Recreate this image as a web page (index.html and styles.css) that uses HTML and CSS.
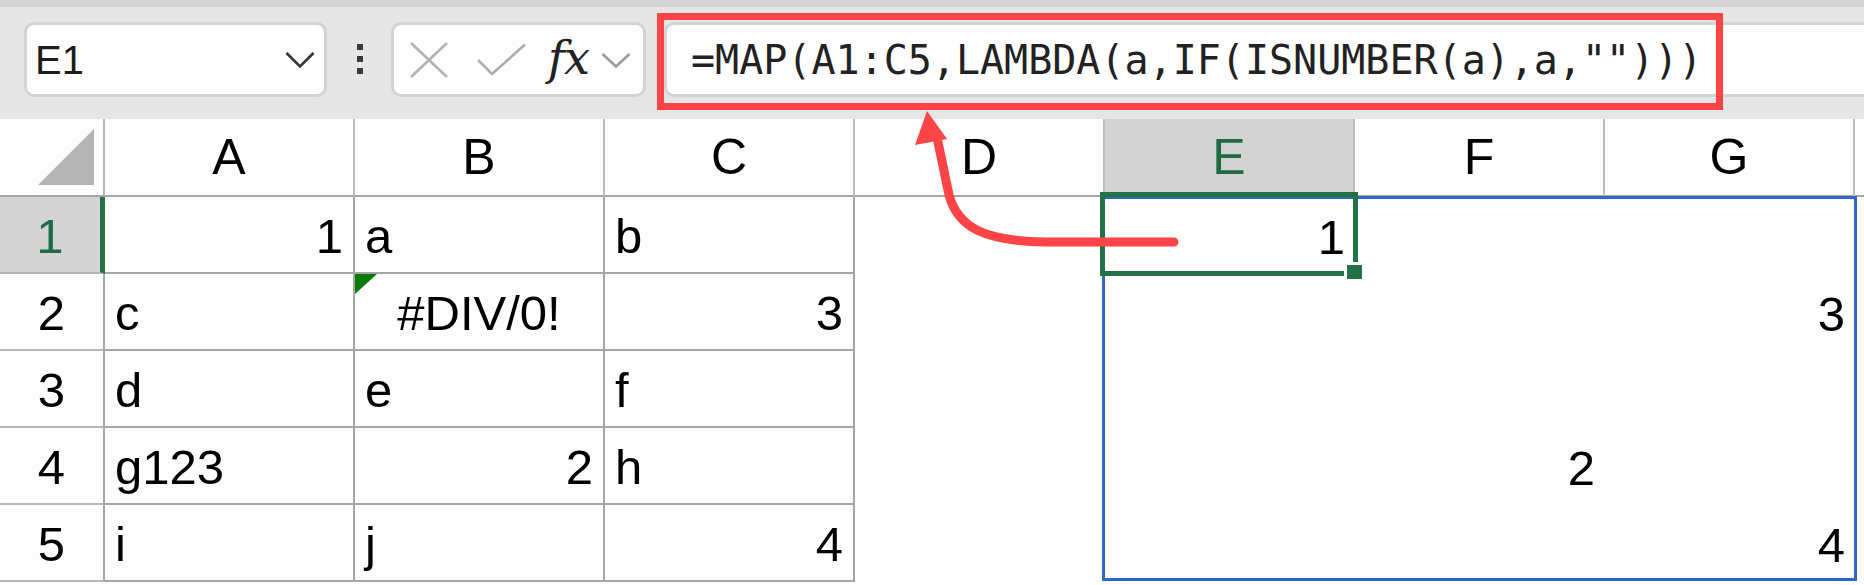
FILE: index.html
```html
<!DOCTYPE html>
<html lang="en">
<head>
<meta charset="utf-8">
<title>MAP LAMBDA</title>
<link rel="stylesheet" href="styles.css">
</head>
<body>
<div class="app">
  <div class="topstrip"></div>
  <div class="toolbar">
    <div class="namebox">
      <span class="ref">E1</span>
      <svg class="nb-chev" width="30" height="18" viewBox="0 0 30 18"><polyline points="1.5,2 15,15.5 28.5,2" fill="none" stroke="#333" stroke-width="2.6"/></svg>
    </div>
    <div class="grip"><i></i><i></i><i></i></div>
    <div class="fxbox">
      <svg class="ic-x" width="38" height="36" viewBox="0 0 38 36"><path d="M1 1 L37 35 M37 1 L1 35" fill="none" stroke="#b3b3b3" stroke-width="2.6"/></svg>
      <svg class="ic-check" width="49" height="33" viewBox="0 0 49 33"><polyline points="1,17 15,31 48,1.5" fill="none" stroke="#adadad" stroke-width="2.6"/></svg>
      <span class="fx">fx</span>
      <svg class="ic-chev" width="30" height="16" viewBox="0 0 30 16"><polyline points="1.5,2 15,14.5 28.5,2" fill="none" stroke="#9c9c9c" stroke-width="2.6"/></svg>
    </div>
    <div class="formula">=MAP(A1:C5,LAMBDA(a,IF(ISNUMBER(a),a,"")))</div>
    <div class="highlight"></div>
  </div>

  <div class="sheet">
    <div class="c corner"><svg width="56" height="56" viewBox="0 0 56 56"><polygon points="56,0 56,56 0,56" fill="#b4b4b4"/></svg></div>
    <div class="c hd">A</div>
    <div class="c hd">B</div>
    <div class="c hd">C</div>
    <div class="c hd">D</div>
    <div class="c hd sel">E</div>
    <div class="c hd">F</div>
    <div class="c hd">G</div>
    <div class="c hd last"></div>

    <div class="c rh sel">1</div>
    <div class="c bd num">1</div>
    <div class="c bd">a</div>
    <div class="c bd">b</div>
    <div class="c"></div>
    <div class="c num">1</div>
    <div class="c"></div>
    <div class="c"></div>
    <div class="c last"></div>

    <div class="c rh">2</div>
    <div class="c bd">c</div>
    <div class="c bd err"><span class="flag"></span>#DIV/0!</div>
    <div class="c bd num">3</div>
    <div class="c"></div>
    <div class="c"></div>
    <div class="c"></div>
    <div class="c num">3</div>
    <div class="c last"></div>

    <div class="c rh">3</div>
    <div class="c bd">d</div>
    <div class="c bd">e</div>
    <div class="c bd">f</div>
    <div class="c"></div>
    <div class="c"></div>
    <div class="c"></div>
    <div class="c"></div>
    <div class="c last"></div>

    <div class="c rh">4</div>
    <div class="c bd">g123</div>
    <div class="c bd num">2</div>
    <div class="c bd">h</div>
    <div class="c"></div>
    <div class="c"></div>
    <div class="c num">2</div>
    <div class="c"></div>
    <div class="c last"></div>

    <div class="c rh">5</div>
    <div class="c bd">i</div>
    <div class="c bd">j</div>
    <div class="c bd num">4</div>
    <div class="c"></div>
    <div class="c"></div>
    <div class="c"></div>
    <div class="c num">4</div>
    <div class="c last"></div>

    <div class="spill"></div>
    <div class="active"></div>
    <div class="handle"></div>
  </div>

  <svg class="arrow" width="1864" height="585" viewBox="0 0 1864 585">
    <path d="M1174 242 L1045 242 C985 241 958 228 949 195 L938 142" fill="none" stroke="#ff4447" stroke-width="9" stroke-linecap="round"/>
    <polygon points="927,111 915,145 947,139" fill="#ff4447"/>
  </svg>
</div>
</body>
</html>
```

FILE: styles.css
```css
html, body {
  margin: 0;
  padding: 0;
}

body {
  width: 1864px;
  height: 585px;
  overflow: hidden;
  background: #fdfdfd;
  font-family: "Liberation Sans", Arial, sans-serif;
  color: #000;
}

.app {
  position: relative;
  width: 1864px;
  height: 585px;
}

.topstrip {
  height: 7px;
  background: #d5d5d5;
}

.toolbar {
  position: relative;
  height: 112px;
  box-sizing: border-box;
  padding: 15px 0 0 24px;
  background: #e6e6e6;
  display: flex;
  align-items: flex-start;
}

.namebox {
  width: 303px;
  height: 75px;
  box-sizing: border-box;
  border: 3px solid #d3d3d3;
  border-radius: 10px;
  background: #fdfdfd;
  display: flex;
  align-items: center;
  justify-content: space-between;
  padding: 0 9px 0 8px;
}

.namebox .ref {
  font-size: 40px;
  color: #1c1c1c;
  line-height: 1;
}

.grip {
  margin: 22px 0 0 30px;
  width: 6px;
  display: flex;
  flex-direction: column;
  gap: 6px;
}

.grip i {
  display: block;
  width: 6px;
  height: 6px;
  background: #3a3a3a;
}

.fxbox {
  margin-left: 28px;
  width: 255px;
  height: 75px;
  box-sizing: border-box;
  border: 3px solid #d3d3d3;
  border-radius: 10px;
  background: #fdfdfd;
  display: flex;
  align-items: center;
}

.ic-x {
  margin-left: 16px;
}

.ic-check {
  margin-left: 29px;
}

.fx {
  margin-left: 22px;
  font-family: "DejaVu Serif", "Liberation Serif", serif;
  font-style: italic;
  font-size: 46px;
  letter-spacing: -1px;
  color: #222;
  line-height: 1;
  position: relative;
  top: -2px;
}

.ic-chev {
  margin-left: 12px;
}

.formula {
  margin-left: 18px;
  flex: 1;
  height: 75px;
  box-sizing: border-box;
  border: 3px solid #d3d3d3;
  border-right: none;
  border-radius: 10px 0 0 10px;
  background: #fefefe;
  display: flex;
  align-items: center;
  padding-left: 24px;
  font-family: "DejaVu Sans Mono", "Liberation Mono", monospace;
  font-size: 40px;
  color: #222;
  white-space: nowrap;
}

.highlight {
  position: absolute;
  left: 657px;
  top: 6px;
  width: 1066px;
  height: 97px;
  box-sizing: border-box;
  border: 7px solid #ff4447;
}

.sheet {
  position: relative;
  display: grid;
  grid-template-columns: 105px repeat(7, 250px) 9px;
  grid-template-rows: 78px repeat(5, 77px);
  background: #fdfdfd;
}

.c {
  box-sizing: border-box;
  display: flex;
  align-items: center;
  padding: 2px 10px 0 10px;
  font-size: 49px;
  white-space: nowrap;
  overflow: hidden;
}

.corner {
  padding: 0 9px 10px 0;
  align-items: flex-end;
  justify-content: flex-end;
  border-right: 2px solid #b9b9b9;
  border-bottom: 2px solid #a6a6a6;
}

.hd {
  justify-content: center;
  font-size: 50px;
  border-right: 2px solid #bdbdbd;
  border-bottom: 2px solid #a6a6a6;
  padding-top: 0;
}

.hd.last {
  border-right: none;
}

.hd.sel {
  background: #d3d3d3;
  color: #1f6b43;
}

.rh {
  justify-content: center;
  border-right: 2px solid #a6a6a6;
  border-bottom: 2px solid #b6b6b6;
}

.rh.sel {
  background: #d3d3d3;
  color: #1f6b43;
  border-right: 5px solid #217346;
}

.bd {
  border-right: 2px solid #a6a6a6;
  border-bottom: 2px solid #a6a6a6;
}

.num {
  justify-content: flex-end;
}

.err {
  position: relative;
  justify-content: center;
}

.flag {
  position: absolute;
  left: 0;
  top: 0;
  width: 0;
  height: 0;
  border-top: 20px solid #0b7a0b;
  border-right: 22px solid transparent;
}

.last {
  padding: 0;
}

.spill {
  position: absolute;
  left: 1102px;
  top: 77px;
  width: 755px;
  height: 385px;
  box-sizing: border-box;
  border: 3px solid #2f67c6;
}

.active {
  position: absolute;
  left: 1100px;
  top: 73px;
  width: 258px;
  height: 84px;
  box-sizing: border-box;
  border: 5px solid #217346;
}

.handle {
  position: absolute;
  left: 1344px;
  top: 143px;
  width: 15px;
  height: 14px;
  background: #217346;
  border: 3px solid #fdfdfd;
}

.arrow {
  position: absolute;
  left: 0;
  top: 0;
  pointer-events: none;
}
```
